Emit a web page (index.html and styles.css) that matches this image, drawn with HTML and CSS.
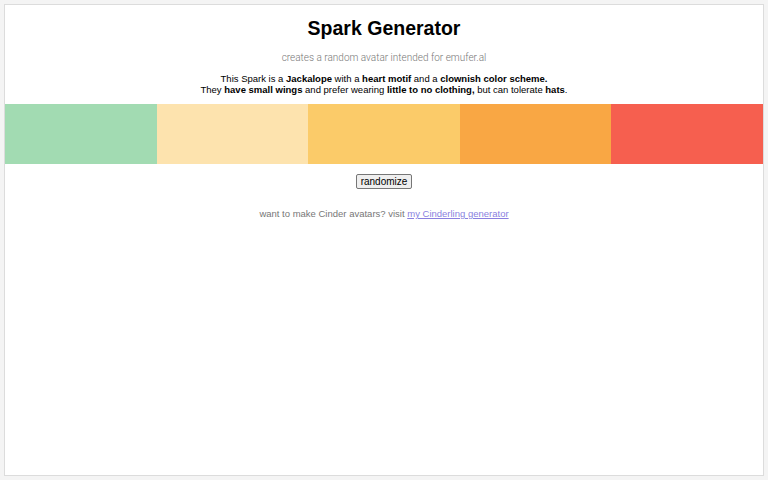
FILE: index.html
```html
<!DOCTYPE html>
<html lang="en">
<head>
    <meta charset="UTF-8">
    <title>Spark Generator</title>
    <link rel="stylesheet" href="styles.css">
</head>
<body>
    <main class="page">
        <h1>Spark Generator</h1>
        <p class="subtitle">creates a random avatar intended for emufer.al</p>
        <p class="desc">This Spark is a <strong>Jackalope</strong> with a <strong>heart motif</strong> and a <strong>clownish color scheme.</strong><br>
        They <strong>have small wings</strong> and prefer wearing <strong>little to no clothing,</strong> but can tolerate <strong>hats</strong>.</p>
        <div class="palette">
            <div class="swatch" style="background:#a2dbb2"></div>
            <div class="swatch" style="background:#fde3ae"></div>
            <div class="swatch" style="background:#fbcb69"></div>
            <div class="swatch" style="background:#f9a744"></div>
            <div class="swatch" style="background:#f65f4f"></div>
        </div>
        <button class="btn">randomize</button>
        <p class="footer">want to make Cinder avatars? visit <a href="#">my Cinderling generator</a></p>
    </main>
</body>
</html>
```

FILE: styles.css
```css
html, body { height: 100%; }
body {
    background-color: #f4f4f4;
    margin: 0;
    padding: 4px;
    box-sizing: border-box;
    font-family: 'Liberation Sans', Arial, sans-serif;
    color: #000;
}
.page {
    background: #fff;
    border: 1px solid #dcdcdc;
    height: 100%;
    box-sizing: border-box;
    text-align: center;
    padding-top: 14px;
}
h1 { font-size: 19.5px; margin: 0; line-height: 18px; }
.subtitle {
    color: #777;
    font-family: Roboto, 'Liberation Sans', sans-serif;
    font-weight: 300;
    font-size: 10px;
    margin: 15px 0 0;
    line-height: 12px;
}
.desc { font-size: 9.5px; line-height: 11px; margin: 9px 0 0; }
.palette { display: flex; height: 60px; margin-top: 9px; }
.swatch { flex: 1; }
.btn {
    margin-top: 10px;
    font-family: 'Liberation Sans', Arial, sans-serif;
    font-size: 10px;
    padding: 1px 4px;
    background: #efefef;
    border: 1px solid #767676;
    border-radius: 2px;
    color: #000;
}
.footer { color: #777; font-size: 9.5px; margin: 19px 0 0; }
.footer a { color: #8a7fe0; }
```
